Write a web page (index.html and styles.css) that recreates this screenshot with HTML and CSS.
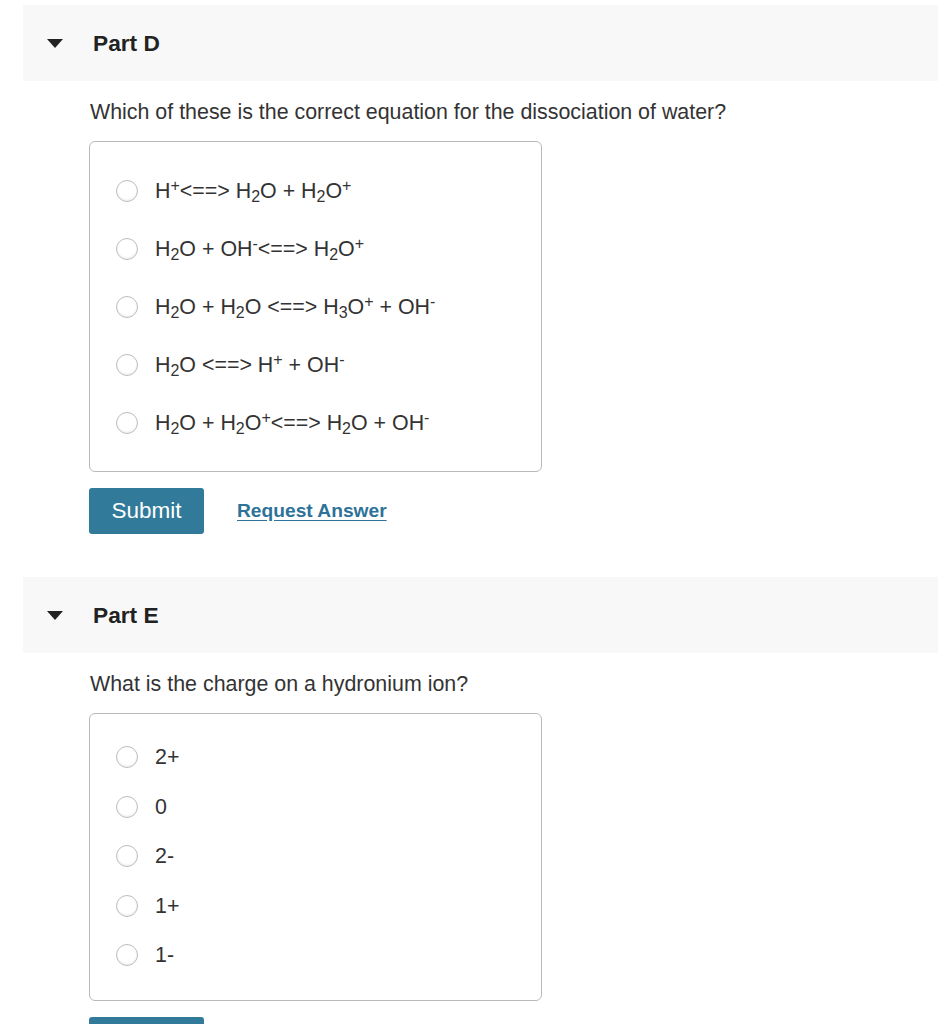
FILE: index.html
```html
<!DOCTYPE html>
<html lang="en">
<head>
<meta charset="utf-8">
<title>Parts D and E</title>
<link rel="stylesheet" href="styles.css">
</head>
<body>
<section class="part">
  <div class="part-header">
    <span class="caret"></span>
    <h2 class="part-title">Part D</h2>
  </div>
  <div class="part-body">
    <p class="question">Which of these is the correct equation for the dissociation of water?</p>
    <div class="choices choices-formula">
      <label class="choice"><span class="radio"></span><span class="choice-text">H<sup>+</sup>&lt;==&gt; H<sub>2</sub>O + H<sub>2</sub>O<sup>+</sup></span></label>
      <label class="choice"><span class="radio"></span><span class="choice-text">H<sub>2</sub>O + OH<sup>-</sup>&lt;==&gt; H<sub>2</sub>O<sup>+</sup></span></label>
      <label class="choice"><span class="radio"></span><span class="choice-text">H<sub>2</sub>O + H<sub>2</sub>O &lt;==&gt; H<sub>3</sub>O<sup>+</sup> + OH<sup>-</sup></span></label>
      <label class="choice"><span class="radio"></span><span class="choice-text">H<sub>2</sub>O &lt;==&gt; H<sup>+</sup> + OH<sup>-</sup></span></label>
      <label class="choice"><span class="radio"></span><span class="choice-text">H<sub>2</sub>O + H<sub>2</sub>O<sup>+</sup>&lt;==&gt; H<sub>2</sub>O + OH<sup>-</sup></span></label>
    </div>
    <div class="actions">
      <button class="btn-submit" type="button">Submit</button>
      <a class="link-request" href="#">Request Answer</a>
    </div>
  </div>
</section>

<section class="part">
  <div class="part-header">
    <span class="caret"></span>
    <h2 class="part-title">Part E</h2>
  </div>
  <div class="part-body">
    <p class="question">What is the charge on a hydronium ion?</p>
    <div class="choices choices-plain">
      <label class="choice"><span class="radio"></span><span class="choice-text">2+</span></label>
      <label class="choice"><span class="radio"></span><span class="choice-text">0</span></label>
      <label class="choice"><span class="radio"></span><span class="choice-text">2-</span></label>
      <label class="choice"><span class="radio"></span><span class="choice-text">1+</span></label>
      <label class="choice"><span class="radio"></span><span class="choice-text">1-</span></label>
    </div>
    <div class="actions">
      <button class="btn-submit" type="button">Submit</button>
      <a class="link-request" href="#">Request Answer</a>
    </div>
  </div>
</section>
</body>
</html>
```

FILE: styles.css
```css
* { box-sizing: border-box; }

html, body {
  margin: 0;
  padding: 0;
  background: #ffffff;
}

body {
  padding-top: 5px;
  font-family: "Liberation Sans", Arial, Helvetica, sans-serif;
  color: #333333;
  font-size: 21.4px;
}

.part {
  margin-bottom: 43px;
}

.part-header {
  margin-left: 23px;
  height: 76px;
  background: #f8f8f8;
  display: flex;
  align-items: center;
}

.caret {
  width: 0;
  height: 0;
  margin-left: 24px;
  border-left: 8px solid transparent;
  border-right: 8px solid transparent;
  border-top: 9px solid #222222;
}

.part-title {
  margin: 0 0 0 30px;
  font-size: 22.7px;
  font-weight: bold;
  color: #222222;
  line-height: 1;
}

.part-body {
  padding-left: 89px;
}

.question {
  margin: 19px 0 17px 1px;
  line-height: 24px;
}

.choices {
  width: 453px;
  border: 1px solid #b9b9b9;
  border-radius: 6px;
  display: flex;
  flex-direction: column;
}

.choices-formula {
  padding: 34px 0 33px;
  gap: 28px;
}

.choices-plain {
  padding: 28px 0 30px;
  gap: 19.5px;
}

.choice {
  height: 30px;
  display: flex;
  align-items: center;
  padding-left: 26px;
  line-height: 24px;
}

.radio {
  width: 22px;
  height: 22px;
  border-radius: 50%;
  border: 1px solid #bdbdbd;
  background: #ffffff;
  box-shadow: inset 0 -1px 2px rgba(0, 0, 0, 0.08);
  flex: none;
}

.choice-text {
  margin-left: 17px;
}

sub, sup {
  font-size: 16px;
  line-height: 0;
  position: relative;
  vertical-align: baseline;
}

sub { top: 4px; }
sup { top: -7px; }

.actions {
  margin-top: 16px;
  display: flex;
  align-items: center;
  gap: 33px;
}

.btn-submit {
  width: 115px;
  height: 46px;
  border: none;
  border-radius: 3px;
  background: #317a9a;
  color: #ffffff;
  font-family: "Liberation Sans", Arial, Helvetica, sans-serif;
  font-size: 22.5px;
  padding: 0;
}

.link-request {
  color: #2d7298;
  font-weight: bold;
  font-size: 19.2px;
  text-decoration: underline;
  text-underline-offset: 3px;
}
```
